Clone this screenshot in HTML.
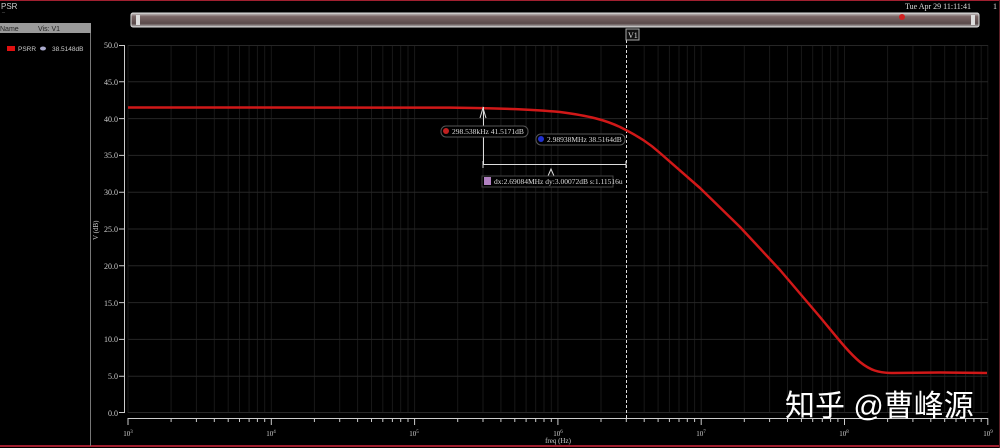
<!DOCTYPE html>
<html><head><meta charset="utf-8"><style>
body{margin:0;background:#000;width:1000px;height:448px;overflow:hidden;position:relative;font-family:"Liberation Serif",serif;}
</style></head><body>
<svg width="1000" height="448" style="position:absolute;left:0;top:0" font-family="Liberation Serif, serif">
<rect x="0" y="0" width="1000" height="448" fill="#000"/>
<line x1="0" y1="0.5" x2="1000" y2="0.5" stroke="#a02030" stroke-width="1"/>
<line x1="0" y1="446" x2="1000" y2="446" stroke="#a02030" stroke-width="2"/>
<line x1="999.5" y1="0" x2="999.5" y2="448" stroke="#602028"/>
<text x="1" y="9" fill="#ccc" font-size="8" font-family="Liberation Sans, sans-serif">PSR</text>
<text x="2" y="14" fill="#888" font-size="6">–</text>
<rect x="0" y="23" width="91" height="10" fill="#9a9a9a"/>
<text x="0" y="31" fill="#222" font-size="7" font-family="Liberation Sans, sans-serif">Name</text>
<text x="38" y="31" fill="#222" font-size="7" font-family="Liberation Sans, sans-serif">Vis: V1</text>
<line x1="90.5" y1="33" x2="90.5" y2="446" stroke="#777"/>
<rect x="7" y="46" width="8" height="5" fill="#e01010"/>
<text x="18" y="51" fill="#ccc" font-size="6.5" font-family="Liberation Sans, sans-serif">PSRR</text>
<ellipse cx="43" cy="48.5" rx="3" ry="2" fill="#aac"/>
<text x="52" y="51" fill="#ccc" font-size="6.5" font-family="Liberation Sans, sans-serif">38.5148dB</text>
<defs><linearGradient id="sb" x1="0" y1="0" x2="0" y2="1"><stop offset="0" stop-color="#ccc"/><stop offset=".25" stop-color="#7a6666"/><stop offset=".75" stop-color="#5a4a4a"/><stop offset="1" stop-color="#bbb"/></linearGradient></defs>
<rect x="131" y="13" width="848" height="14" rx="2" fill="url(#sb)" stroke="#ddd"/>
<rect x="136" y="15" width="4" height="10" fill="#ddd"/>
<rect x="971" y="15" width="4" height="10" fill="#ddd"/>
<circle cx="902" cy="17" r="3" fill="#d02020"/>
<text x="905" y="9" fill="#ddd" font-size="8">Tue Apr 29 11:11:41</text>
<text x="993" y="9" fill="#ddd" font-size="8">1</text>
<g stroke="#181818" stroke-width="1">
<path d="M128 45V413M171.1 45V413M196.4 45V413M214.3 45V413M228.2 45V413M239.5 45V413M249.1 45V413M257.4 45V413M264.7 45V413M271.3 45V413M314.4 45V413M339.7 45V413M357.6 45V413M371.5 45V413M382.8 45V413M392.4 45V413M400.7 45V413M408 45V413M414.6 45V413M457.7 45V413M483 45V413M500.9 45V413M514.8 45V413M526.1 45V413M535.7 45V413M544 45V413M551.3 45V413M557.9 45V413M601 45V413M644.2 45V413M658.1 45V413M669.4 45V413M679 45V413M687.3 45V413M694.6 45V413M701.2 45V413M744.3 45V413M769.6 45V413M787.5 45V413M801.4 45V413M812.7 45V413M822.3 45V413M830.6 45V413M837.9 45V413M844.5 45V413M887.6 45V413M912.9 45V413M930.8 45V413M944.7 45V413M956 45V413M965.6 45V413M973.9 45V413M981.2 45V413M987.8 45V413"/>
</g>
<g stroke="#262626" stroke-width="1">
<path d="M128 45.5H988M128 81.8H988M128 118.6H988M128 155.4H988M128 192.2H988M128 229H988M128 265.8H988M128 302.6H988M128 339.4H988M128 376.2H988M128 412.5H988"/>
</g>
<g stroke="#ccc" stroke-width="1">
<line x1="124.5" y1="45" x2="124.5" y2="413"/>
<path d="M119 45.5H125M119 81.8H125M119 118.6H125M119 155.4H125M119 192.2H125M119 229H125M119 265.8H125M119 302.6H125M119 339.4H125M119 376.2H125M119 412.5H125"/>
</g>
<g fill="#ccc" font-size="8" text-anchor="end">
<text x="118" y="48">50.0</text><text x="118" y="85">45.0</text><text x="118" y="122">40.0</text><text x="118" y="158">35.0</text><text x="118" y="195">30.0</text><text x="118" y="232">25.0</text><text x="118" y="269">20.0</text><text x="118" y="306">15.0</text><text x="118" y="342">10.0</text><text x="118" y="379">5.0</text><text x="118" y="416">0.0</text>
</g>
<text x="98" y="240" fill="#ccc" font-size="7" transform="rotate(-90 98 240)">V (dB)</text>
<g stroke="#ccc" stroke-width="1">
<line x1="128" y1="418.5" x2="988" y2="418.5"/>
<path d="M128 418V425M271.3 418V425M414.6 418V425M557.9 418V425M701.2 418V425M844.5 418V425M987.8 418V425"/>
<path d="M171.1 418V422M196.4 418V422M214.3 418V422M228.2 418V422M239.5 418V422M249.1 418V422M257.4 418V422M264.7 418V422M314.4 418V422M339.7 418V422M357.6 418V422M371.5 418V422M382.8 418V422M392.4 418V422M400.7 418V422M408 418V422M457.7 418V422M483 418V422M500.9 418V422M514.8 418V422M526.1 418V422M535.7 418V422M544 418V422M551.3 418V422M601 418V422M626.3 418V422M644.2 418V422M658.1 418V422M669.4 418V422M679 418V422M687.3 418V422M694.6 418V422M744.3 418V422M769.6 418V422M787.5 418V422M801.4 418V422M812.7 418V422M822.3 418V422M830.6 418V422M837.9 418V422M887.6 418V422M912.9 418V422M930.8 418V422M944.7 418V422M956 418V422M965.6 418V422M973.9 418V422M981.2 418V422"/>
</g>
<g fill="#ccc" font-size="7" text-anchor="middle">
<text x="128" y="436">10<tspan font-size="5" dy="-3">3</tspan></text>
<text x="271" y="436">10<tspan font-size="5" dy="-3">4</tspan></text>
<text x="414" y="436">10<tspan font-size="5" dy="-3">5</tspan></text>
<text x="558" y="436">10<tspan font-size="5" dy="-3">6</tspan></text>
<text x="701" y="436">10<tspan font-size="5" dy="-3">7</tspan></text>
<text x="844" y="436">10<tspan font-size="5" dy="-3">8</tspan></text>
<text x="988" y="436">10<tspan font-size="5" dy="-3">9</tspan></text>
<text x="558" y="443">freq (Hz)</text>
</g>
<line x1="626.5" y1="40" x2="626.5" y2="418" stroke="#ddd" stroke-dasharray="3,2"/>
<rect x="626" y="29" width="13" height="11" fill="#111" stroke="#aaa"/>
<text x="628" y="38" fill="#ddd" font-size="8">V1</text>
<path d="M128 107.5L450 107.6C490 108 530 109 560 112C590 116 605 120 620 127C640 137 650 144 660 153L700 188L740 227L780 270L820 317C835 335 848 352 860 362C870 370 878 373 893 373L940 372.5L987 373" fill="none" stroke="#d01818" stroke-width="2.5" stroke-linejoin="round"/>
<g stroke="#ddd" stroke-width="1" fill="none">
<path d="M483.5 107V165"/>
<path d="M480 118L483 108L486 118"/>
<path d="M483 164.5H626"/>
<path d="M483 161V168M626 161V168"/>
<path d="M548 176L551 169L554 176"/>
</g>
<rect x="441" y="126" width="87" height="11" rx="5" fill="#000" stroke="#555"/>
<circle cx="446" cy="131" r="3" fill="#c02020"/>
<text x="452" y="134" fill="#ddd" font-size="7.5">298.538kHz 41.5171dB</text>
<rect x="536" y="134" width="89" height="11" rx="5" fill="#000" stroke="#555"/>
<circle cx="541" cy="139" r="3" fill="#2030d0"/>
<text x="547" y="142" fill="#ddd" font-size="7.5">2.98938MHz 38.5164dB</text>
<rect x="482" y="176" width="131" height="11" fill="#000" stroke="#444"/>
<rect x="484" y="177" width="7" height="8" fill="#b080c0"/>
<text x="494" y="184" fill="#ddd" font-size="7.5">dx:2.69084MHz dy:3.00072dB s:1.11516u</text>
<text x="785" y="416" fill="#fff" font-size="30" font-family="Liberation Sans, Noto Sans CJK SC, sans-serif">知乎 @曹峰源</text>
</svg>
</body></html>
